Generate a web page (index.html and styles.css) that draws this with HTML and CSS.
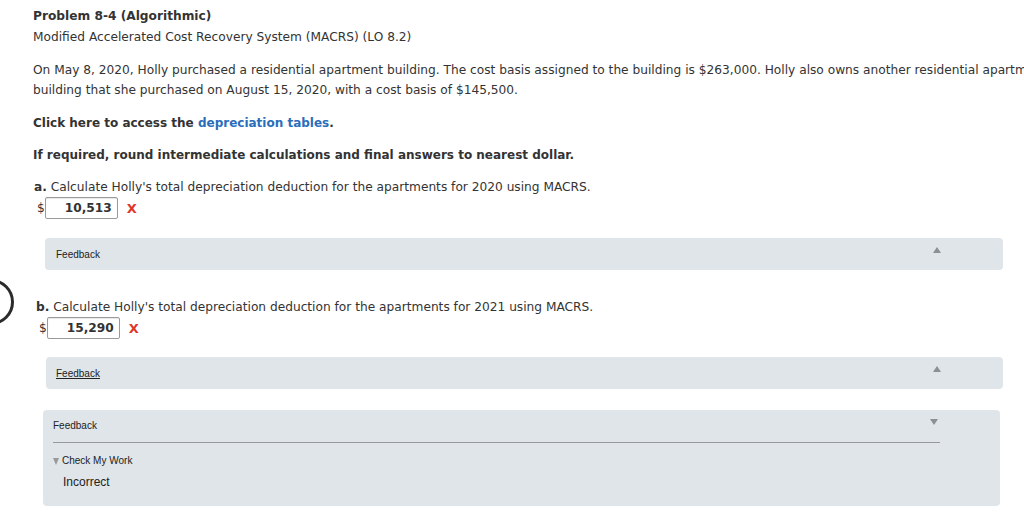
FILE: index.html
```html
<!DOCTYPE html>
<html>
<head>
<meta charset="utf-8">
<link rel="stylesheet" href="styles.css">
</head>
<body>
<div class="page">
  <h1 class="title">Problem 8-4 (Algorithmic)</h1>
  <div class="subtitle">Modified Accelerated Cost Recovery System (MACRS) (LO 8.2)</div>
  <p class="intro">On May 8, 2020, Holly purchased a residential apartment building. The cost basis assigned to the building is $263,000. Holly also owns another residential apartment building that she purchased on August 15, 2020, with a cost basis of $145,500.</p>
  <p class="bold">Click here to access the <a class="link">depreciation tables</a>.</p>
  <p class="bold">If required, round intermediate calculations and final answers to nearest dollar.</p>

  <div class="question qa">
    <div class="qtext"><b>a.</b> Calculate Holly's total depreciation deduction for the apartments for 2020 using MACRS.</div>
    <div class="answer"><span class="dollar">$</span><span class="box">10,513</span><span class="wrong">X</span></div>
  </div>
  <div class="panel p1"><span class="fb">Feedback</span><span class="tri up"></span></div>

  <div class="question qb">
    <div class="ring"></div>
    <div class="qtext"><b>b.</b> Calculate Holly's total depreciation deduction for the apartments for 2021 using MACRS.</div>
    <div class="answer"><span class="dollar">$</span><span class="box">15,290</span><span class="wrong">X</span></div>
  </div>
  <div class="panel p2"><span class="fb u">Feedback</span><span class="tri up"></span></div>

  <div class="panel p3">
    <div class="p3head"><span class="fb">Feedback</span><span class="tri down"></span></div>
    <div class="check"><span class="tri small"></span>Check My Work</div>
    <div class="incorrect">Incorrect</div>
  </div>
</div>
</body>
</html>
```

FILE: styles.css
```css
html, body { margin: 0; padding: 0; overflow: hidden; background: #fff; }
body { font-family: "DejaVu Sans", Verdana, sans-serif; color: #333; font-size: 12.2px; }
.page { padding: 8px 0 0 33px; width: 1032px; position: relative; }
.title { font-size: 12.2px; font-weight: bold; margin: 0; line-height: 16px; }
.subtitle { margin-top: 5px; line-height: 16px; }
.intro { margin: 15px 0 0 0; line-height: 20px; }
.bold { font-weight: bold; font-size: 12px; margin: 15px 0 0 0; line-height: 16px; }
.bold + .bold { margin-top: 16px; }
.link { color: #2a6ebb; }
.question { position: relative; padding-left: 1px; }
.qa { margin-top: 16px; }
.qb { margin-top: 29px; padding-left: 3px; }
.qtext { line-height: 16px; }
.answer { display: flex; align-items: center; margin-top: 1px; height: 24px; padding-left: 3px; }
.box { display: inline-block; width: 66px; height: 20px; line-height: 20px; border: 1px solid #9a9a9a; border-radius: 2px; text-align: right; padding-right: 5px; font-weight: bold; box-sizing: content-box; box-shadow: inset 0 1px 1px rgba(0,0,0,0.1); }
.wrong { color: #e0352b; font-weight: bold; margin-left: 9px; font-size: 13px; }
.panel { background: #dfe5e9; border-radius: 4px; position: relative; font-family: "Liberation Sans", Arial, sans-serif; font-size: 10px; color: #222; }
.p1 { margin: 18px 0 0 12px; width: 958px; height: 32px; display: flex; align-items: center; padding-left: 11px; box-sizing: border-box; }
.p2 { margin: 17px 0 0 13px; width: 957px; height: 32px; display: flex; align-items: center; padding-left: 10px; box-sizing: border-box; }
.fb.u { text-decoration: underline; }
.tri { display: inline-block; width: 0; height: 0; }
.tri.up { position: absolute; left: 888px; top: 9px; border-left: 4px solid transparent; border-right: 4px solid transparent; border-bottom: 6px solid #8a9096; }
.p2 .tri.up { left: 887px; }
.p3 { margin: 21px 0 0 10px; width: 957px; height: 96px; padding: 8px 60px 0 10px; box-sizing: border-box; }
.p3head { position: relative; height: 24px; border-bottom: 1px solid #999; line-height: 16px; }
.tri.down { position: absolute; left: 877px; top: 1px; border-left: 4px solid transparent; border-right: 4px solid transparent; border-top: 6px solid #8a9096; }
.check { margin-top: 10px; line-height: 16px; display: flex; align-items: center; }
.tri.small { border-left: 3.5px solid transparent; border-right: 3.5px solid transparent; border-top: 7px solid #999; margin-right: 3px; }
.incorrect { font-size: 12px; margin: 5px 0 0 10px; line-height: 16px; }
.ring { position: absolute; left: -65px; top: -20px; width: 40px; height: 40px; border: 3px solid #2b2b2b; border-radius: 50%; }
```
